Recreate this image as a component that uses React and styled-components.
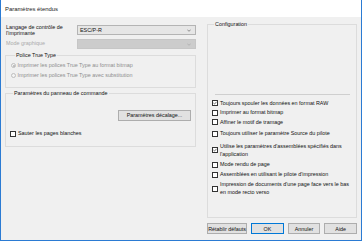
import styled, { createGlobalStyle } from 'styled-components';

const GlobalStyle = createGlobalStyle`
  html, body {
    margin: 0;
    padding: 0;
    background: #fff;
  }
  body {
    font-family: "Liberation Sans", Arial, sans-serif;
  }
  * {
    box-sizing: border-box;
  }
`;

const Window = styled.div`
  width: 362px;
  height: 241px;
  display: flex;
  flex-direction: column;
  border: 1px solid #2b7bd3;
  border-top: none;
  background: #f0f0f0;
  color: #111;
  font-size: 5.4px;
`;

const TitleBar = styled.div`
  height: 17px;
  flex-shrink: 0;
  display: flex;
  align-items: center;
  padding-left: 4px;
  background: #fff;
  font-size: 5.9px;
  color: #222;
`;

const Body = styled.div`
  flex: 1;
  display: grid;
  grid-template-columns: 191px 150px;
  column-gap: 11px;
  padding: 4px 4px 6px 4px;
`;

const LeftColumn = styled.div`
  display: flex;
  flex-direction: column;
  padding-top: 4px;
`;

const RightColumn = styled.div`
  display: flex;
  flex-direction: column;
`;

const FieldRow = styled.div`
  display: grid;
  grid-template-columns: 72px 119px;
  align-items: ${p => (p.$top ? 'start' : 'center')};
  margin-top: ${p => p.$mt || 0}px;
`;

const FieldLabel = styled.div`
  padding-left: 1px;
  line-height: 5.5px;
  color: ${p => (p.$disabled ? '#ababab' : '#111')};
`;

const Combo = styled.div`
  height: 10px;
  display: flex;
  align-items: center;
  justify-content: space-between;
  padding: 0 4px 0 2px;
  background: ${p => (p.$disabled ? '#cccccc' : '#e6e6e6')};
  border: 1px solid ${p => (p.$disabled ? '#c6c6c6' : '#b4b4b4')};
  svg {
    width: 4px;
    height: 3px;
  }
`;

const Group = styled.fieldset`
  margin: ${p => p.$mt || 0}px 0 0 0;
  padding: 0 ${p => p.$pr || 0}px ${p => p.$pb || 0}px ${p => p.$pl || 0}px;
  border: 1px solid #dcdcdc;
  min-width: 0;
  display: flex;
  flex-direction: column;
  flex: ${p => (p.$grow ? 1 : 'none')};
`;

const Legend = styled.legend`
  margin-left: ${p => p.$ml}px;
  padding: 0 1px;
  line-height: 7px;
  color: #111;
`;

const OptionRow = styled.div`
  display: flex;
  align-items: center;
  gap: ${p => p.$gap || 2}px;
  margin-top: ${p => p.$mt || 0}px;
  line-height: ${p => p.$lh || 7}px;
  color: ${p => (p.$disabled ? '#8e8e8e' : '#111')};
`;

const Radio = styled.span`
  width: 5px;
  height: 5px;
  flex-shrink: 0;
  border-radius: 50%;
  border: 1px solid #bdbdbd;
  background: #f4f4f4;
  display: flex;
  align-items: center;
  justify-content: center;
  &::after {
    content: '';
    width: 2px;
    height: 2px;
    border-radius: 50%;
    background: ${p => (p.$checked ? '#b0b0b0' : 'transparent')};
  }
`;

const Box = styled.span`
  width: 6px;
  height: 6px;
  flex-shrink: 0;
  border: 1px solid #333;
  background: #fff;
  display: flex;
  align-items: center;
  justify-content: center;
  svg {
    width: 5px;
    height: 4px;
  }
`;

const ButtonRow = styled.div`
  display: flex;
  justify-content: flex-end;
  gap: ${p => p.$gap || 0}px;
  margin-top: ${p => p.$mt || 0}px;
  padding-right: ${p => p.$pr || 0}px;
`;

const Button = styled.div`
  width: ${p => p.$w || 35}px;
  height: 11px;
  display: flex;
  align-items: center;
  justify-content: center;
  background: #e1e1e1;
  border: 1px solid ${p => (p.$primary ? '#0078d7' : '#adadad')};
  color: #111;
  white-space: nowrap;
`;

const Separator = styled.div`
  height: 1px;
  margin: 66px 6px 0 3px;
  background: #cfcfcf;
`;

const Chevron = ({ color }) => (
  <svg viewBox="0 0 4 3">
    <polyline points="0.3,0.6 2,2.3 3.7,0.6" fill="none" stroke={color} strokeWidth="0.7" />
  </svg>
);

const Check = () => (
  <svg viewBox="0 0 5 4">
    <polyline points="0.5,2 1.9,3.3 4.5,0.5" fill="none" stroke="#222" strokeWidth="0.8" />
  </svg>
);

const CheckOption = ({ checked, mt, lh, children }) => (
  <OptionRow $mt={mt} $lh={lh} $gap={2}>
    <Box>{checked && <Check />}</Box>
    <span>{children}</span>
  </OptionRow>
);

const configOptions = [
  { mt: 4.5, checked: true, text: ['Toujours spouler les données en format RAW'] },
  { mt: 2.5, text: ['Imprimer au format bitmap'] },
  { mt: 2.5, text: ['Affiner le motif de tramage'] },
  { mt: 4.5, text: ['Toujours utiliser le paramètre Source du pilote'] },
  { mt: 5, lh: 8, checked: true, text: ["Utilise les paramètres d'assemblées spécifiés dans", "l'application"] },
  { mt: 3, text: ['Mode rendu de page'] },
  { mt: 3, text: ["Assemblées en utilisant le pilote d'impression"] },
  { mt: 3, lh: 7.5, text: ["Impression de documents d'une page face vers le bas", 'en mode recto verso'] },
];

export default function App() {
  return (
    <>
      <GlobalStyle />
      <Window>
        <TitleBar>Paramètres étendus</TitleBar>
        <Body>
          <LeftColumn>
            <FieldRow $top>
              <FieldLabel>
                Langage de contrôle de
                <br />
                l'imprimante
              </FieldLabel>
              <Combo>
                <span>ESC/P-R</span>
                <Chevron color="#666" />
              </Combo>
            </FieldRow>
            <FieldRow $mt={3}>
              <FieldLabel $disabled>Mode graphique</FieldLabel>
              <Combo $disabled>
                <span />
                <Chevron color="#a8a8a8" />
              </Combo>
            </FieldRow>

            <Group $mt={3} $pl={5} $pb={8}>
              <Legend $ml={4}>Police True Type</Legend>
              <OptionRow $disabled $mt={3} $gap={1.5}>
                <Radio $checked />
                <span>Imprimer les polices True Type au format bitmap</span>
              </OptionRow>
              <OptionRow $disabled $mt={2.5} $gap={1.5}>
                <Radio />
                <span>Imprimer les polices True Type avec substitution</span>
              </OptionRow>
            </Group>

            <Group $mt={2} $pl={4} $pb={9}>
              <Legend $ml={3}>Paramètres du panneau de commande</Legend>
              <ButtonRow $mt={13} $pr={4}>
                <Button $w={73}>Paramètres décalage...</Button>
              </ButtonRow>
              <CheckOption mt={9.5}>Sauter les pages blanches</CheckOption>
            </Group>
          </LeftColumn>

          <RightColumn>
            <Group $grow $pl={4}>
              <Legend $ml={2}>Configuration</Legend>
              <Separator />
              {configOptions.map((o, i) => (
                <CheckOption key={i} mt={o.mt} lh={o.lh} checked={o.checked}>
                  {o.text.map((t, j) => (
                    <span key={j}>
                      {j > 0 && <br />}
                      {t}
                    </span>
                  ))}
                </CheckOption>
              ))}
            </Group>
            <ButtonRow $mt={5} $gap={4}>
              <Button $w={43}>Rétablir défauts</Button>
              <Button $primary>OK</Button>
              <Button>Annuler</Button>
              <Button>Aide</Button>
            </ButtonRow>
          </RightColumn>
        </Body>
      </Window>
    </>
  );
}
